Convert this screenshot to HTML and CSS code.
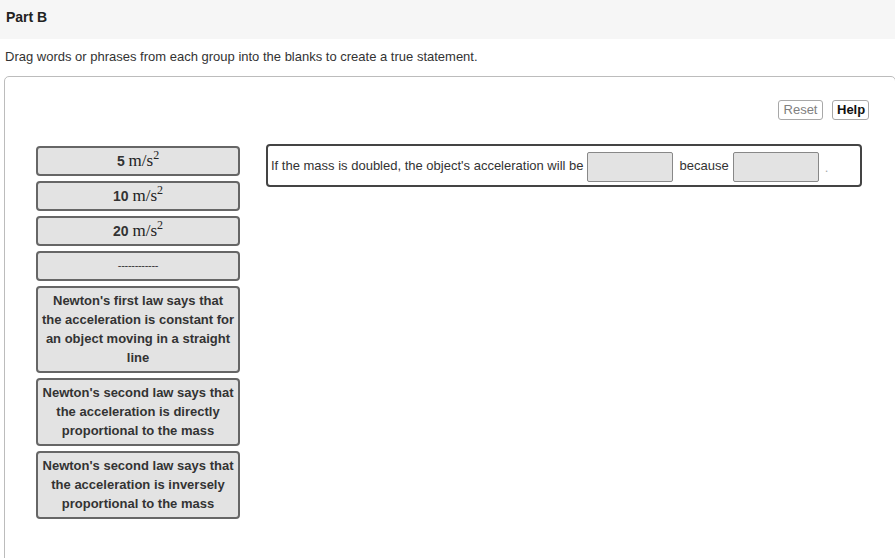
FILE: index.html
```html
<!DOCTYPE html>
<html>
<head>
<meta charset="utf-8">
<link rel="stylesheet" href="styles.css">
</head>
<body>
<div class="part-header">Part B</div>
<p class="instructions">Drag words or phrases from each group into the blanks to create a true statement.</p>
<div class="workspace">
  <div class="toolbar">
    <button class="btn btn-reset">Reset</button>
    <button class="btn btn-help">Help</button>
  </div>
  <div class="content">
    <div class="tiles">
      <div class="tile tile-math">5 <span class="math">m/s<sup>2</sup></span></div>
      <div class="tile tile-math">10 <span class="math">m/s<sup>2</sup></span></div>
      <div class="tile tile-math">20 <span class="math">m/s<sup>2</sup></span></div>
      <div class="tile tile-dash">------------</div>
      <div class="tile">Newton's first law says that<br>the acceleration is constant for an object moving in a straight line</div>
      <div class="tile">Newton's second law says that the acceleration is directly proportional to the mass</div>
      <div class="tile">Newton's second law says that the acceleration is inversely proportional to the mass</div>
    </div>
    <div class="sentence">
      <span class="text">If the mass is doubled, the object's acceleration will be</span>
      <span class="blank"></span>
      <span class="text">because</span>
      <span class="blank"></span>
      <span class="period">.</span>
    </div>
  </div>
</div>
</body>
</html>
```
FILE: styles.css
```css
html, body {
  margin: 0;
  padding: 0;
  background: #ffffff;
  font-family: "Liberation Sans", Arial, sans-serif;
  color: #333;
  overflow: hidden;
}
.part-header {
  height: 39px;
  background: #f6f6f6;
  font-weight: bold;
  font-size: 14px;
  color: #222;
  padding-left: 6px;
  line-height: 34px;
  box-sizing: border-box;
}
.instructions {
  margin: 0;
  padding: 10px 0 0 5px;
  font-size: 13px;
  line-height: 16px;
  height: 27px;
  color: #333;
}
.workspace {
  margin-left: 4px;
  width: 892px;
  height: 520px;
  border: 1px solid #bcbcbc;
  border-radius: 5px 5px 0 0;
  box-sizing: border-box;
}
.toolbar {
  display: flex;
  justify-content: flex-end;
  gap: 9px;
  padding: 23px 26px 0 0;
  height: 43px;
  box-sizing: border-box;
}
.btn {
  height: 20px;
  padding: 0 4px;
  font-family: "Liberation Sans", Arial, sans-serif;
  font-size: 13px;
  line-height: 18px;
  background: #fff;
  border: 1px solid #a8a8a8;
  border-radius: 3px;
}
.btn-reset {
  color: #808080;
  width: 45px;
}
.btn-help {
  color: #111;
  font-weight: bold;
  width: 37px;
}
.content {
  display: flex;
  align-items: flex-start;
  padding: 24px 0 0 31px;
}
.tiles {
  display: flex;
  flex-direction: column;
  gap: 5px;
  width: 204px;
  margin-top: 2px;
}
.tile {
  box-sizing: border-box;
  background: #e3e3e3;
  border: 2px solid #666;
  border-radius: 4px;
  padding: 3px 2px 4px;
  text-align: center;
  font-weight: bold;
  font-size: 13px;
  line-height: 19px;
  color: #333;
}
.tile-math {
  font-size: 14px;
  height: 30px;
}
.math {
  font-family: "Liberation Serif", "DejaVu Serif", serif;
  font-weight: normal;
  font-size: 17px;
  color: #222;
}
.math sup {
  font-size: 12px;
  line-height: 0;
  vertical-align: 7px;
}
.tile-dash {
  font-weight: normal;
  font-size: 11px;
  letter-spacing: -0.3px;
}
.sentence {
  margin-left: 26px;
  width: 596px;
  height: 43px;
  box-sizing: border-box;
  border: 2px solid #444;
  border-radius: 4px;
  display: flex;
  align-items: center;
  padding: 0 0 0 3px;
  font-size: 13px;
  color: #333;
}
.blank {
  width: 86px;
  height: 30px;
  box-sizing: border-box;
  background: #e3e3e3;
  border: 1px solid #888;
  border-radius: 2px;
  margin: 2px 6px 0 4px;
}
.text {
  white-space: nowrap;
}
.period {
  color: #aaa;
  margin-top: 4px;
}
```
